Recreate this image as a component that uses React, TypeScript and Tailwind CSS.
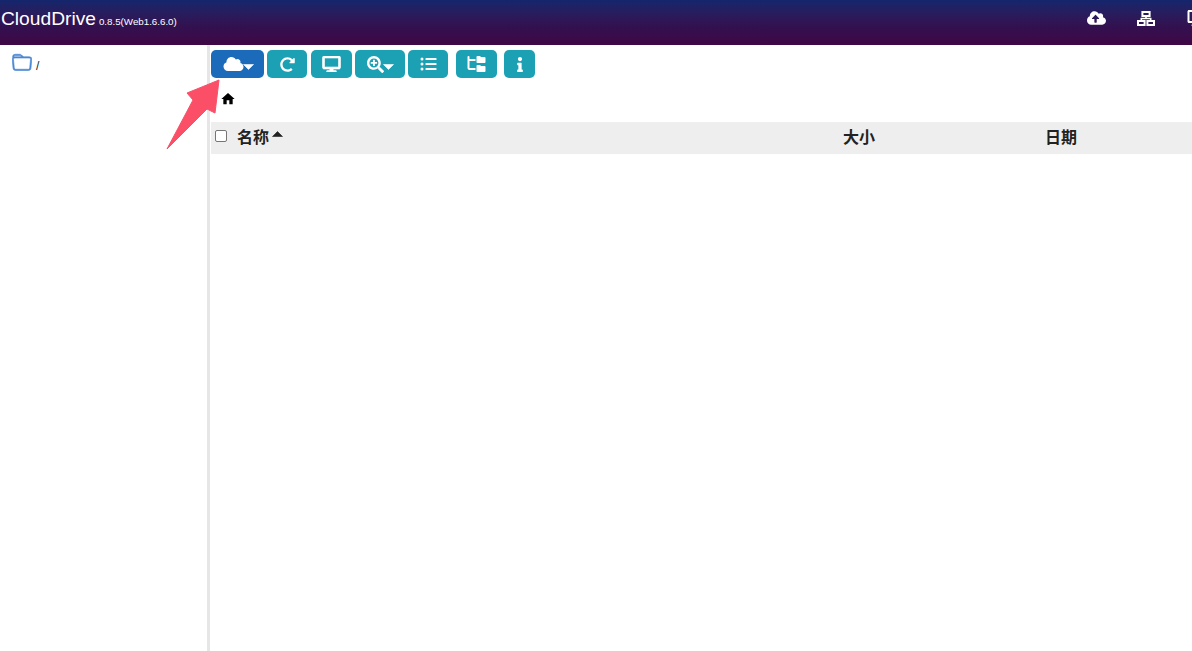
import { FaCloud, FaRedoAlt, FaDesktop, FaSearchPlus, FaListUl, FaInfo, FaCloudUploadAlt } from "react-icons/fa";
import { FaFolderTree } from "react-icons/fa6";
import { BsFolder } from "react-icons/bs";
import { MdHome } from "react-icons/md";

const teal = "h-[28px] rounded-[5px] bg-[#1ba0b4] text-white flex items-center justify-center";

function Caret({ up = false, className = "" }: { up?: boolean; className?: string }) {
  return (
    <svg className={className} width="11" height="6" viewBox="0 0 11 6" fill="currentColor">
      <polygon points={up ? "5.5,0.5 10.5,5.5 0.5,5.5" : "0.5,0.5 10.5,0.5 5.5,5.5"} stroke="currentColor" strokeWidth="0.6" strokeLinejoin="round" />
    </svg>
  );
}

function Network({ className = "" }: { className?: string }) {
  return (
    <svg className={className} viewBox="0 0 18 15" fill="none" stroke="currentColor" strokeWidth="2">
      <rect x="5.4" y="1" width="7.2" height="4" />
      <rect x="1" y="10" width="6.6" height="4" />
      <rect x="10.4" y="10" width="6.6" height="4" />
      <path d="M9 5v2.5M4.3 10V7.5h9.4V10" strokeWidth="1.6" />
    </svg>
  );
}

export default function App() {
  return (
    <div className="relative h-[651px] w-[1192px] overflow-hidden bg-white font-['Liberation_Sans','Noto_Sans_CJK_SC',sans-serif] text-[#212529]">
      <header className="flex h-[45px] items-center justify-between bg-gradient-to-b from-[#13266c] via-[#33104f] via-60% to-[#3f0645] pb-[7px] pl-[1px] text-white">
        <div className="flex items-baseline">
          <span className="text-[19.2px] leading-[26px]">CloudDrive</span>
          <span className="ml-[3px] text-[9.75px]">0.8.5(Web1.6.6.0)</span>
        </div>
        <div className="mb-[2px] flex w-[105px] items-center overflow-hidden">
          <FaCloudUploadAlt className="h-[18px] w-[19px] shrink-0" />
          <Network className="ml-[31px] h-[15px] w-[18px] shrink-0" />
          <FaDesktop className="ml-[32px] h-[16px] w-[19px] shrink-0" />
        </div>
      </header>
      <div className="flex h-[606px]">
        <aside className="mr-[1px] flex h-full w-[210px] shrink-0 items-start border-r-[3px] border-[#e6e6e6] pl-[12px] pt-[8px]">
          <BsFolder className="h-[20px] w-[20px] text-[#4a86d4]" stroke="currentColor" strokeWidth={0.5} />
          <span className="ml-[4px] mt-[6px] text-[12px] leading-[14px]">/</span>
        </aside>
        <main className="flex-1">
          <div className="flex items-center pt-[5px]">
            <button className="flex h-[28px] w-[53px] items-center justify-center rounded-[5px] bg-[#1b6bba] pl-[1px] text-white">
              <FaCloud className="h-[16px] w-[21px]" />
              <Caret className="-ml-[1px] mt-[5px]" />
            </button>
            <button className={`${teal} ml-[3px] w-[40px]`}><FaRedoAlt className="h-[15px] w-[15px]" /></button>
            <button className={`${teal} ml-[4px] w-[41px]`}><FaDesktop className="h-[16px] w-[19px]" stroke="currentColor" strokeWidth={20} /></button>
            <button className={`${teal} ml-[3px] w-[50px]`}>
              <FaSearchPlus className="h-[17px] w-[17px]" />
              <Caret className="-ml-[1px] mt-[5px]" />
            </button>
            <button className={`${teal} ml-[3px] w-[40px]`}><FaListUl className="h-[16px] w-[17px]" /></button>
            <button className={`${teal} ml-[8px] w-[41px]`}><FaFolderTree className="h-[16px] w-[19px]" /></button>
            <button className={`${teal} ml-[7px] w-[31px]`}><FaInfo className="h-[15px] w-[8px]" /></button>
          </div>
          <div className="flex h-[44px] items-start pl-[9px] pt-[13px]">
            <MdHome className="h-[16px] w-[16px] text-black" />
          </div>
          <div className="flex h-[32px] items-center bg-[#eeeeee] text-[16px] font-bold leading-[20px] text-[#222]">
            <span className="mb-[4px] ml-[4px] h-[12px] w-[12px] rounded-[2px] border border-[#767676] bg-white" />
            <span className="ml-[10px]">名称</span>
            <Caret up className="mb-[9px] ml-[3px]" />
            <span className="ml-[560px]">大小</span>
            <span className="ml-[170px]">日期</span>
          </div>
        </main>
      </div>
      <svg className="absolute left-[160px] top-[75px]" width="65" height="80" viewBox="160 75 65 80">
        <polygon points="219,80 187,93 193,100 167,149 207,109 215,113" fill="#fb4f67" stroke="#fb4f67" strokeLinejoin="round" />
      </svg>
    </div>
  );
}
